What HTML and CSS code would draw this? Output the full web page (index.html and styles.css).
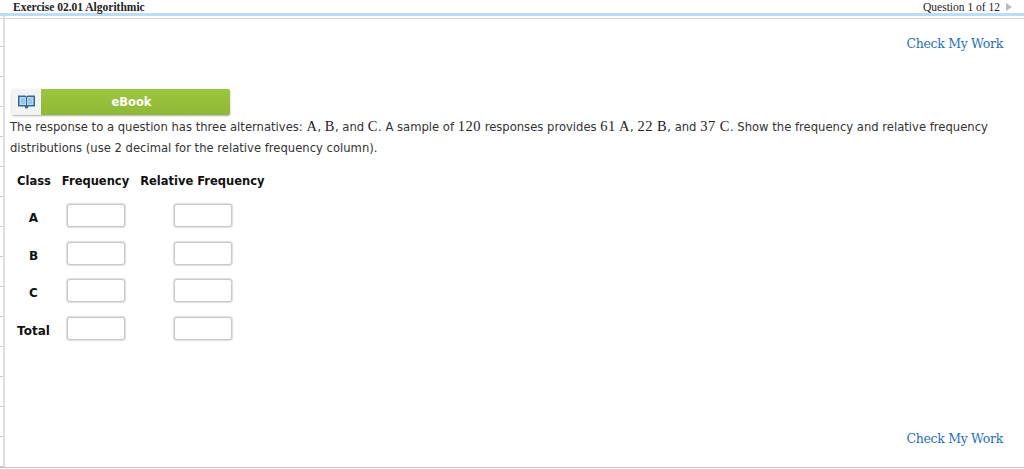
FILE: index.html
```html
<!DOCTYPE html>
<html>
<head>
    <title>Exercise 02.01 Algorithmic</title>
    <link rel="stylesheet" href="styles.css">
</head>
<body>
<div class="header">
    <span class="exerciseTitle">Exercise 02.01 Algorithmic</span>
    <span class="questionCount">Question 1 of 12 <i class="nextArrow"></i></span>
</div>
<div class="page">
    <div class="checkRow"><a href="#">Check My Work</a></div>
    <div class="ebook">
        <div class="ebookIcon">
            <svg width="17" height="14" viewBox="0 0 17 14">
                <path d="M0 0.500h7.500l1 0.800 1-0.800H17v11h-6.500l-1 2h-2l-1-2H0z" fill="#2f6a9c"/>
                <path d="M1.500 2h6.300l0.200 0.500v7.500H1.500zM9 2.500l0.200-0.500h6.300v8H9z" fill="#b9d6ec"/>
                <path d="M3 4h4M3 6h4M3 8h4M10 4h4M10 6h4M10 8h4" stroke="#7fa9cb" stroke-width="0.800"/>
            </svg>
        </div>
        <div class="ebookButton">eBook</div>
    </div>
    <p class="question">The response to a question has three alternatives: <span class="math">A</span>, <span class="math">B</span>, and <span class="math">C</span>. A sample of <span class="math">120</span> responses provides <span class="math">61 A</span>, <span class="math">22 B</span>, and <span class="math">37 C</span>. Show the frequency and relative frequency distributions (use 2 decimal for the relative frequency column).</p>
    <div class="answerHead">
        <div class="colHead classHead">Class</div>
        <div class="colHead">Frequency</div>
        <div class="colHead">Relative Frequency</div>
    </div>
    <div class="answers">
        <div class="rowHead">A</div>
        <div class="cell"><input class="box" type="text"></div>
        <div class="cell"><input class="box" type="text"></div>

        <div class="rowHead">B</div>
        <div class="cell"><input class="box" type="text"></div>
        <div class="cell"><input class="box" type="text"></div>

        <div class="rowHead">C</div>
        <div class="cell"><input class="box" type="text"></div>
        <div class="cell"><input class="box" type="text"></div>

        <div class="rowHead">Total</div>
        <div class="cell"><input class="box" type="text"></div>
        <div class="cell"><input class="box" type="text"></div>
    </div>
    <div class="checkRow bottom"><a href="#">Check My Work</a></div>
</div>
</body>
</html>
```

FILE: styles.css
```css
html, body {
    width: 100%;
    height: 100%;
    padding: 0px;
    margin: 0px;
    overflow: hidden;
    background-color: #FFF;
}

body {
    display: flex;
    flex-direction: column;
    height: 469px;
}

.header {
    display: flex;
    justify-content: space-between;
    height: 13px;
    padding: 0px 12px 0px 13px;
    border-bottom: 3px solid #bcdcf7;
    box-shadow: 0px 2px 0px #fff, 0px 3px 0px #d4d4d4;
    font-family: "Liberation Serif", serif;
    font-size: 11.500px;
    line-height: 14px;
    color: #222;
}

.exerciseTitle {
    font-weight: bold;
}

.questionCount {
    display: flex;
    align-items: center;
    gap: 6px;
    height: 13px;
}

.nextArrow {
    width: 0px;
    height: 0px;
    border-left: 6px solid #bbb;
    border-top: 4px solid transparent;
    border-bottom: 4px solid transparent;
}

.page {
    flex: 1;
    display: flex;
    flex-direction: column;
    margin-bottom: 1px;
    padding: 0px 21px 0px 10px;
    border-bottom: 1px solid #c4c4c4;
    background: repeating-linear-gradient(#0000 0px, #0000 29px, #ccc 29px, #ccc 30px) 0px 1px / 3px 100% no-repeat,
        linear-gradient(#ddd, #ddd) 3px 0px / 2px 100% no-repeat;
    font-family: "DejaVu Sans", sans-serif;
    font-size: 11.600px;
    color: #333;
}

.checkRow {
    display: flex;
    justify-content: flex-end;
    margin-top: 19px;
    font-family: "DejaVu Serif", serif;
    font-size: 12.500px;
    line-height: 18px;
}

.checkRow a {
    color: #1f6fc4;
    text-decoration: none;
    letter-spacing: -0.3px;
}

.checkRow.bottom {
    margin-top: auto;
    margin-bottom: 19px;
}

.ebook {
    display: flex;
    width: 218px;
    height: 26px;
    margin: 36px 0px 0px 2px;
    box-shadow: 0px 1px 2px #aaa;
    border-radius: 2px;
}

.ebookIcon {
    display: flex;
    align-items: center;
    justify-content: center;
    width: 29px;
    background-color: #f3f3f3;
}

.ebookButton {
    flex: 1;
    padding-right: 8px;
    background: linear-gradient(#9cc63e, #8fb935);
    border-radius: 0px 2px 2px 0px;
    color: #FFF;
    font-weight: bold;
    font-size: 11.500px;
    line-height: 26px;
    text-align: center;
}

.question {
    margin: 2px 0px 0px 0px;
    line-height: 20.500px;
}

.math {
    font-family: "Liberation Serif", serif;
    font-size: 14.500px;
    letter-spacing: 0.500px;
    line-height: 1;
    color: #222;
}

.answerHead {
    display: flex;
    gap: 11px;
    margin: 13px 0px 0px 7px;
    color: #111;
    font-weight: bold;
    font-size: 11.500px;
    line-height: 20px;
    white-space: nowrap;
}

.answers {
    display: grid;
    grid-template-columns: 45px 107px 100px;
    grid-auto-rows: 37.500px;
    margin: 6px 0px 0px 7px;
    color: #111;
    font-weight: bold;
}

.rowHead {
    display: flex;
    align-items: center;
    justify-content: center;
    box-sizing: border-box;
    width: 33px;
    padding-top: 5px;
    font-size: 12px;
}

.cell {
    display: flex;
    align-items: center;
    padding-left: 5px;
}

.box {
    box-sizing: border-box;
    width: 58px;
    height: 23px;
    padding: 0px;
    background-color: #FFF;
    border: 1px solid #c9c9c9;
    border-radius: 3px;
    box-shadow: 0px 0px 1px 1px #ddd;
}
```
